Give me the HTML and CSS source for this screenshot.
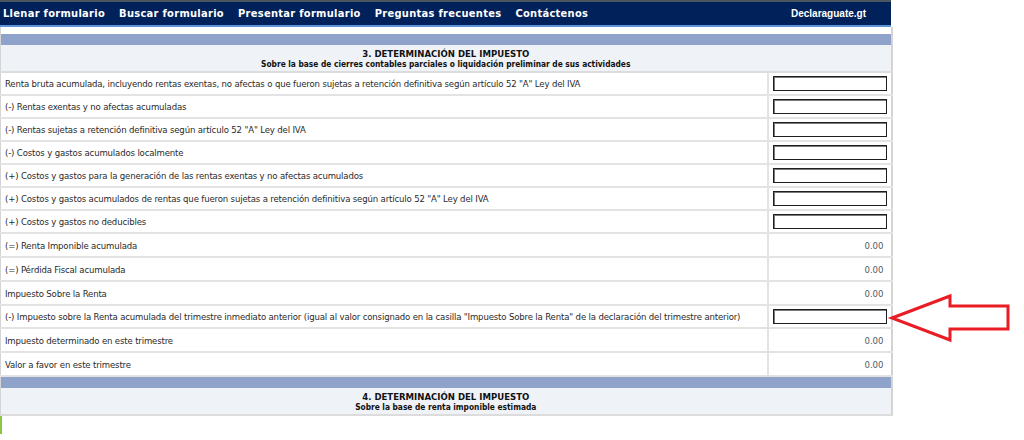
FILE: index.html
```html
<!DOCTYPE html>
<html lang="es">
<head>
<meta charset="utf-8">
<title>Declaraguate.gt</title>
<link rel="stylesheet" href="styles.css">
</head>
<body>
<div class="page">
  <nav class="topnav">
    <div class="links">
      <a href="#">Llenar formulario</a>
      <a href="#">Buscar formulario</a>
      <a href="#">Presentar formulario</a>
      <a href="#">Preguntas frecuentes</a>
      <a href="#">Contáctenos</a>
    </div>
    <span class="brand">Declaraguate.gt</span>
  </nav>
  <table class="form">
    <colgroup><col class="c-label"><col class="c-value"></colgroup>
    <tr class="spacer"><td colspan="2"></td></tr>
    <tr class="bar"><td colspan="2"></td></tr>
    <tr class="head"><th colspan="2"><div class="title">3. DETERMINACIÓN DEL IMPUESTO</div><div class="sub">Sobre la base de cierres contables parciales o liquidación preliminar de sus actividades</div></th></tr>
    <tr class="in"><td class="lbl">Renta bruta acumulada, incluyendo rentas exentas, no afectas o que fueron sujetas a retención definitiva según artículo 52 "A" Ley del IVA</td><td class="val"><input type="text"></td></tr>
    <tr class="in"><td class="lbl">(-) Rentas exentas y no afectas acumuladas</td><td class="val"><input type="text"></td></tr>
    <tr class="in"><td class="lbl">(-) Rentas sujetas a retención definitiva según artículo 52 "A" Ley del IVA</td><td class="val"><input type="text"></td></tr>
    <tr class="in"><td class="lbl">(-) Costos y gastos acumulados localmente</td><td class="val"><input type="text"></td></tr>
    <tr class="in"><td class="lbl">(+) Costos y gastos para la generación de las rentas exentas y no afectas acumulados</td><td class="val"><input type="text"></td></tr>
    <tr class="in"><td class="lbl">(+) Costos y gastos acumulados de rentas que fueron sujetas a retención definitiva según artículo 52 "A" Ley del IVA</td><td class="val"><input type="text"></td></tr>
    <tr class="in"><td class="lbl">(+) Costos y gastos no deducibles</td><td class="val"><input type="text"></td></tr>
    <tr class="out"><td class="lbl">(=) Renta Imponible acumulada</td><td class="val num">0.00</td></tr>
    <tr class="out"><td class="lbl">(=) Pérdida Fiscal acumulada</td><td class="val num">0.00</td></tr>
    <tr class="out"><td class="lbl">Impuesto Sobre la Renta</td><td class="val num">0.00</td></tr>
    <tr class="in"><td class="lbl">(-) Impuesto sobre la Renta acumulada del trimestre inmediato anterior (igual al valor consignado en la casilla "Impuesto Sobre la Renta" de la declaración del trimestre anterior)</td><td class="val"><input type="text"></td></tr>
    <tr class="out"><td class="lbl">Impuesto determinado en este trimestre</td><td class="val num">0.00</td></tr>
    <tr class="out"><td class="lbl">Valor a favor en este trimestre</td><td class="val num">0.00</td></tr>
    <tr class="bar"><td colspan="2"></td></tr>
    <tr class="head head2"><th colspan="2"><div class="title">4. DETERMINACIÓN DEL IMPUESTO</div><div class="sub">Sobre la base de renta imponible estimada</div></th></tr>
  </table>
  <div class="green-mark"></div>
  <svg class="arrow" width="140" height="70" viewBox="880 285 140 70" aria-hidden="true">
    <polygon points="892,318 950,296 950,306 1008,306 1008,329 950,329 950,340" fill="none" stroke="#ea1c24" stroke-width="3" stroke-linejoin="miter"/>
  </svg>
</div>
</body>
</html>
```

FILE: styles.css
```css
html, body {
  margin: 0;
  padding: 0;
  background: #ffffff;
}

.page {
  position: relative;
  width: 1024px;
  height: 440px;
  overflow: hidden;
  font-family: "DejaVu Sans Condensed", "DejaVu Sans", sans-serif;
  color: #2a2a2a;
}

.topnav {
  width: 891px;
  height: 23px;
  box-sizing: content-box;
  background: #00215a;
  border-top: 2px solid #4a5560;
  border-bottom: 2px solid #5f93d8;
  display: flex;
  align-items: center;
  justify-content: space-between;
}

.links {
  display: flex;
  gap: 14px;
  padding-left: 3px;
}

.links a {
  color: #ffffff;
  text-decoration: none;
  font-weight: bold;
  font-size: 11px;
  letter-spacing: 0.3px;
}

.brand {
  color: #ffffff;
  font-family: "Liberation Sans", Arial, sans-serif;
  font-weight: bold;
  font-size: 10px;
  padding-right: 25px;
}

.form {
  width: 891px;
  border-collapse: collapse;
  border-left: 1px solid #d4d4d4;
  border-right: 2px solid #d4d4d4;
  table-layout: fixed;
}

.c-label {
  width: 767px;
}

.c-value {
  width: 124px;
}

.form td, .form th {
  padding: 0;
}

.spacer td {
  height: 7px;
}

.bar td {
  height: 11px;
  background: #8ea2ca;
}

.head th {
  height: 25px;
  background: #eff2f7;
  border-bottom: 2px solid #dcdcdc;
  text-align: center;
  color: #111;
  font-weight: bold;
  line-height: 10px;
  padding-top: 1px;
  vertical-align: middle;
}

.head .title {
  font-size: 9.5px;
}

.head .sub {
  font-size: 8.3px;
}

.lbl {
  font-size: 9.5px;
  letter-spacing: -0.15px;
  padding-left: 4px !important;
  border-bottom: 2px solid #e3e3e3;
  white-space: nowrap;
}

.val {
  border-left: 2px solid #e3e3e3;
  border-bottom: 2px solid #e3e3e3;
  padding: 0 3px 0 4px !important;
}

.in td {
  height: 21px;
}

.out td {
  height: 22px;
}

.num {
  text-align: right;
  font-size: 9.5px;
  color: #555a63;
  padding-right: 7px !important;
}

.val input {
  display: block;
  width: 114px;
  height: 15px;
  box-sizing: border-box;
  margin: 0;
  padding: 0;
  border: 1px solid #1e1e1e;
  box-shadow: inset 1px 1px 0 #7a7a7a;
  background: #fff;
}

.green-mark {
  width: 2px;
  height: 18px;
  background: #8cc63f;
}

.arrow {
  position: absolute;
  left: 880px;
  top: 285px;
}
```
